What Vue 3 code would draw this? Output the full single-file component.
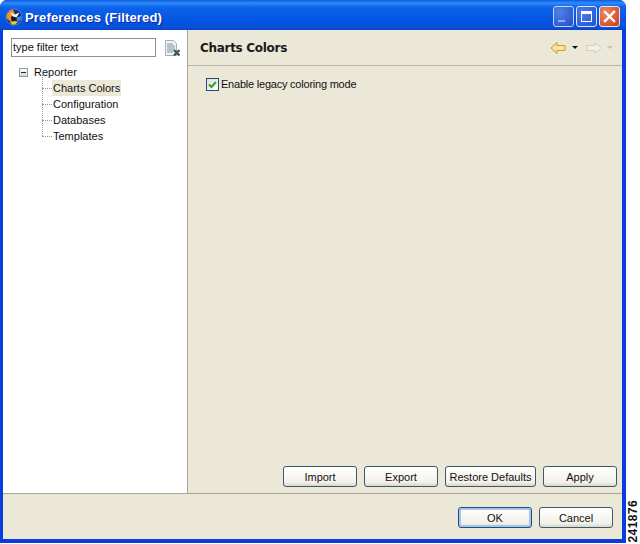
<script setup>
const children = ['Charts Colors', 'Configuration', 'Databases', 'Templates']
const topButtons = ['Import', 'Export', 'Restore Defaults', 'Apply']
</script>

<template>
  <div class="page">
    <div class="window">
      <div class="titlebar">
        <svg class="app-icon" width="18" height="18" viewBox="0 0 18 18">
          <circle cx="9" cy="9" r="8" fill="#16307c" stroke="#7fa8e8" stroke-width=".6" />
          <path d="M1.500 10A7.600 7.600 0 0 1 8 1.500L10 6 6 9l1 6z" fill="#ee9420" />
          <path d="M5 4.500l5 2 4.500-2-3 5-3.500-1z" fill="#f6f6ec" />
          <path d="M6 8.500l5 1-1 3.500-3 .5z" fill="#16162a" />
          <path d="M5 14l5-1 3 1-3 2.500H7z" fill="#e8cc30" />
          <path d="M12 9.500l4.500-1.500-1 4-3.500 2z" fill="#4c8ae0" />
        </svg>
        <span class="title">Preferences (Filtered)</span>
        <div class="win-btns">
          <div class="wb wb-min"><span class="min-glyph"></span></div>
          <div class="wb wb-max"><span class="max-glyph"></span></div>
          <div class="wb wb-close">
            <svg width="13" height="13" viewBox="0 0 13 13"><path d="M2 2l9 9M11 2l-9 9" stroke="#fff" stroke-width="2.4" stroke-linecap="square" /></svg>
          </div>
        </div>
      </div>
      <div class="client">
        <div class="main">
          <aside class="sidebar">
            <div class="filter-row">
              <div class="filter-input">type filter text</div>
              <svg class="clear-icon" width="17" height="17" viewBox="0 0 17 17">
                <path d="M1.5.5h8l3 3v12h-11z" fill="#f4f4ee" stroke="#a8aeb4" />
                <path d="M3 4h6M3 6h8M3 8h8M3 10h7M3 12h6" stroke="#6f95b8" />
                <path d="M10 10l5.500 5.500M15.500 10L10 15.500" stroke="#4a5358" stroke-width="2.400" />
              </svg>
            </div>
            <div class="tree">
              <div class="tree-root">
                <span class="expander"><span class="minus"></span></span>
                <span class="node-label">Reporter</span>
              </div>
              <div class="tree-children">
                <div v-for="(c, i) in children" :key="c" class="tree-item">
                  <span class="dots"></span>
                  <span class="item-label" :class="{ selected: i === 0 }">{{ c }}</span>
                </div>
              </div>
            </div>
          </aside>
          <section class="content">
            <header class="content-head">
              <h1 class="head-title">Charts Colors</h1>
              <div class="nav">
                <svg width="16" height="14" viewBox="0 0 16 14"><path d="M1 7l6-5.500v3h8v5H7v3z" fill="#fde49a" stroke="#c89a30" /></svg>
                <span class="caret"></span>
                <svg class="nav-fwd" width="16" height="14" viewBox="0 0 16 14"><path d="M15 7L9 1.500v3H1v5h8v3z" fill="#f2f2ec" stroke="#cfcfc6" /></svg>
                <span class="caret caret-off"></span>
              </div>
            </header>
            <div class="content-body">
              <label class="check-row">
                <span class="checkbox">
                  <svg width="9" height="9" viewBox="0 0 9 9"><path d="M1 4.500l2.500 2.500L8 2" fill="none" stroke="#2fa52f" stroke-width="2" /></svg>
                </span>
                <span class="check-label">Enable legacy coloring mode</span>
              </label>
            </div>
            <div class="content-actions">
              <button v-for="b in topButtons" :key="b" class="btn" :class="{ wide: b === 'Restore Defaults' }">{{ b }}</button>
            </div>
          </section>
        </div>
        <footer class="footer">
          <button class="btn btn-default">OK</button>
          <button class="btn">Cancel</button>
        </footer>
      </div>
    </div>
    <div class="side-id"><span>241876</span></div>
  </div>
</template>

<style>
html, body { margin: 0; background: #fff; }
</style>

<style scoped>
.page {
  width: 640px;
  height: 544px;
  display: flex;
  background: #fff;
  overflow: hidden;
  font-family: "Liberation Sans", sans-serif;
  font-size: 11px;
  color: #111;
}
.window {
  width: 627px;
  height: 543px;
  box-sizing: border-box;
  display: flex;
  flex-direction: column;
  background: #0a3de0;
  border-radius: 7px 7px 0 0;
  padding: 0 4px 4px 3px;
}
.titlebar {
  height: 30px;
  flex: none;
  box-sizing: border-box;
  margin: 0 -4px 0 -3px;
  padding: 3px 6px 0 5px;
  display: flex;
  align-items: center;
  border-radius: 7px 7px 0 0;
  background: linear-gradient(#0a5ae0 0, #2f8cf6 3px, #0c63ea 7px, #0453e0 22px, #0a50d8 28px, #0a3fc8 30px);
}
.app-icon { flex: none; }
.title {
  margin-left: 2px;
  padding-top: 2px;
  color: #fff;
  font-weight: 700;
  font-size: 13px;
  letter-spacing: .15px;
  text-shadow: 1px 1px 0 #0a2c9a;
}
.win-btns {
  margin-left: auto;
  display: flex;
  gap: 2px;
}
.wb {
  width: 21px;
  height: 21px;
  box-sizing: border-box;
  border: 1px solid #dfe8fa;
  border-radius: 3px;
  display: flex;
  align-items: center;
  justify-content: center;
  background: radial-gradient(circle at 30% 30%, #5c86e8, #2c50c4);
}
.wb-min { opacity: .85; justify-content: flex-start; align-items: flex-end; padding: 0 0 4px 4px; }
.min-glyph { width: 7px; height: 2px; background: #a8c0ee; }
.wb-max { background: radial-gradient(circle at 30% 30%, #4a7ef0, #2050d0); }
.max-glyph {
  width: 11px;
  height: 11px;
  box-sizing: border-box;
  border: 1px solid #fff;
  border-top-width: 3px;
}
.wb-close { background: radial-gradient(circle at 30% 30%, #ea8a68, #d03c14); }
.client {
  flex: 1;
  min-height: 0;
  display: flex;
  flex-direction: column;
  background: #ebe8d8;
}
.main {
  height: 464px;
  flex: none;
  box-sizing: border-box;
  display: flex;
  border-bottom: 1px solid #a8a598;
}
.sidebar {
  width: 185px;
  flex: none;
  box-sizing: border-box;
  background: #fff;
  border-right: 1px solid #a8a598;
  padding: 8px 0 0 8px;
}
.filter-row {
  display: flex;
  align-items: center;
  gap: 8px;
}
.filter-input {
  width: 145px;
  height: 19px;
  box-sizing: border-box;
  border: 1px solid #8a8f8f;
  padding-left: 1px;
  line-height: 17px;
  white-space: nowrap;
}
.clear-icon { flex: none; margin-top: 2px; }
.tree {
  margin-top: 7px;
  padding-left: 8px;
}
.tree-root {
  height: 16px;
  display: flex;
  align-items: center;
}
.expander {
  width: 9px;
  height: 9px;
  box-sizing: border-box;
  border: 1px solid #8a9aa8;
  background: linear-gradient(#fff, #d8d8d0);
  display: flex;
  align-items: center;
  justify-content: center;
}
.minus { width: 5px; height: 1px; background: #222; }
.node-label { margin-left: 6px; white-space: nowrap; }
.tree-item {
  height: 16px;
  display: flex;
  align-items: center;
  margin-left: 23px;
  position: relative;
}
.dots {
  width: 10px;
  height: 0;
  flex: none;
  border-top: 1px dotted #999;
}
.tree-item::before {
  content: "";
  position: absolute;
  left: 0;
  top: -8px;
  height: 16px;
  border-left: 1px dotted #999;
}
.item-label {
  padding: 0 1px;
  line-height: 16px;
  white-space: nowrap;
}
.selected { background: #ebe8d8; }
.content {
  flex: 1;
  min-width: 0;
  display: flex;
  flex-direction: column;
}
.content-head {
  height: 36px;
  flex: none;
  box-sizing: border-box;
  border-bottom: 1px solid #b8b6a8;
  display: flex;
  align-items: center;
  padding: 0 9px 0 12px;
}
.head-title {
  margin: 0;
  padding-top: 1px;
  font-size: 12px;
  font-weight: 700;
  font-family: "DejaVu Sans", sans-serif;
  letter-spacing: -.3px;
  color: #1a1a1a;
}
.nav {
  margin-left: auto;
  display: flex;
  align-items: center;
}
.caret {
  width: 0;
  height: 0;
  margin: 0 8px 0 6px;
  border: 3px solid transparent;
  border-top: 3px solid #111;
  border-bottom: 0;
}
.caret-off { border-top-color: #c4c2b6; margin: 0 0 0 5px; }
.content-body {
  flex: 1;
  padding: 10px 0 0 18px;
}
.check-row {
  display: flex;
  align-items: center;
  gap: 2px;
  height: 16px;
}
.check-label { letter-spacing: -.22px; }
.checkbox {
  width: 13px;
  height: 13px;
  box-sizing: border-box;
  border: 1px solid #1f4f80;
  background: linear-gradient(135deg, #dcdcd4, #fff);
  display: flex;
  align-items: center;
  justify-content: center;
}
.content-actions {
  display: flex;
  justify-content: flex-end;
  gap: 7px;
  padding: 0 5px 6px 0;
}
.btn {
  width: 74px;
  height: 21px;
  box-sizing: border-box;
  padding: 0;
  border: 1px solid #3b5a6e;
  border-radius: 3px;
  background: linear-gradient(#fff, #f2f1ea 80%, #d8d5c8);
  font: inherit;
  color: #111;
}
.btn.wide { width: 91px; }
.footer {
  flex: 1;
  display: flex;
  justify-content: flex-end;
  align-items: center;
  gap: 7px;
  padding: 2px 9px 0 0;
}
.btn-default {
  border-color: #1f4f80;
  box-shadow: inset 0 0 0 2px #a8c4e8;
}
.side-id {
  flex: 1;
  display: flex;
  align-items: flex-end;
  justify-content: center;
  padding-bottom: 2px;
}
.side-id span {
  writing-mode: vertical-rl;
  transform: rotate(180deg);
  font-weight: 700;
  font-size: 12px;
  letter-spacing: .4px;
  color: #111;
}
</style>
